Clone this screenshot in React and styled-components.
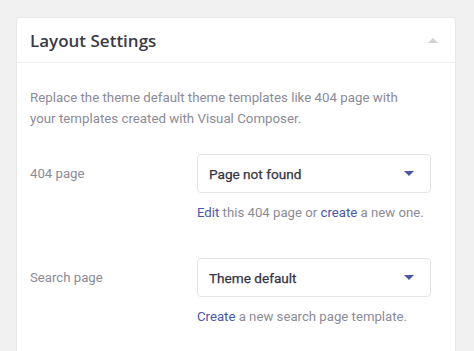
import styled, { createGlobalStyle } from "styled-components";

const Global = createGlobalStyle`
  html, body {
    margin: 0;
    padding: 0;
    background: #f1f1f1;
    height: 100%;
    overflow: hidden;
  }
  body {
    font-family: Roboto, "Liberation Sans", sans-serif;
  }
`;

const Page = styled.div`
  padding: 17px 18px 0 16px;
  height: 351px;
  box-sizing: border-box;
`;

const Card = styled.section`
  background: #fff;
  border: 1px solid #e9e9e9;
  border-bottom: none;
  border-radius: 4px 4px 0 0;
  height: 340px;
  box-sizing: border-box;
`;

const Header = styled.header`
  display: flex;
  align-items: center;
  justify-content: space-between;
  height: 44px;
  padding: 0 17px 0 13px;
  border-bottom: 1px solid #efefef;
`;

const Title = styled.h2`
  margin: 0;
  font-family: "Open Sans", "Noto Sans", sans-serif;
  font-size: 17px;
  font-weight: 600;
  color: #3a3a46;
`;

const Caret = styled.span`
  width: 0;
  height: 0;
  border-left: 5px solid transparent;
  border-right: 5px solid transparent;
  border-bottom: 5px solid ${(p) => p.$color};
  border-top: none;
  ${(p) => p.$down && `
    border-bottom: none;
    border-top: 5px solid ${p.$color};
  `}
`;

const Body = styled.div`
  padding: 24px 24px 0 13px;
`;

const Description = styled.p`
  margin: 0 0 25px;
  font-size: 13.3px;
  line-height: 21px;
  color: #8b8b97;
`;

const Row = styled.div`
  display: grid;
  grid-template-columns: 167px 1fr;
  align-items: start;
  margin-bottom: 35px;
`;

const Label = styled.label`
  font-size: 13.2px;
  color: #8b8b97;
  line-height: 39px;
`;

const Field = styled.div`
  display: flex;
  flex-direction: column;
`;

const Select = styled.div`
  display: flex;
  align-items: center;
  justify-content: space-between;
  height: 39px;
  box-sizing: border-box;
  border: 1px solid #e3e3e6;
  border-radius: 4px;
  padding: 0 16px 0 11px;
  font-size: 13.6px;
  font-weight: 400;
  color: #34343f;
  -webkit-text-stroke: 0.25px #34343f;
`;

const Help = styled.div`
  margin-top: 10px;
  font-size: 13.2px;
  line-height: 20px;
  color: #8b8b97;
`;

const Link = styled.a`
  color: #4a57a8;
  text-decoration: none;
`;

export default function App() {
  return (
    <>
      <Global />
      <Page>
        <Card>
          <Header>
            <Title>Layout Settings</Title>
            <Caret $color="#cfcfd4" />
          </Header>
          <Body>
            <Description>
              Replace the theme default theme templates like 404 page with
              <br />
              your templates created with Visual Composer.
            </Description>
            <Row>
              <Label>404 page</Label>
              <Field>
                <Select>
                  Page not found
                  <Caret $down $color="#4a57a8" />
                </Select>
                <Help>
                  <Link>Edit</Link> this 404 page or <Link>create</Link> a new
                  one.
                </Help>
              </Field>
            </Row>
            <Row>
              <Label>Search page</Label>
              <Field>
                <Select>
                  Theme default
                  <Caret $down $color="#4a57a8" />
                </Select>
                <Help>
                  <Link>Create</Link> a new search page template.
                </Help>
              </Field>
            </Row>
          </Body>
        </Card>
      </Page>
    </>
  );
}
